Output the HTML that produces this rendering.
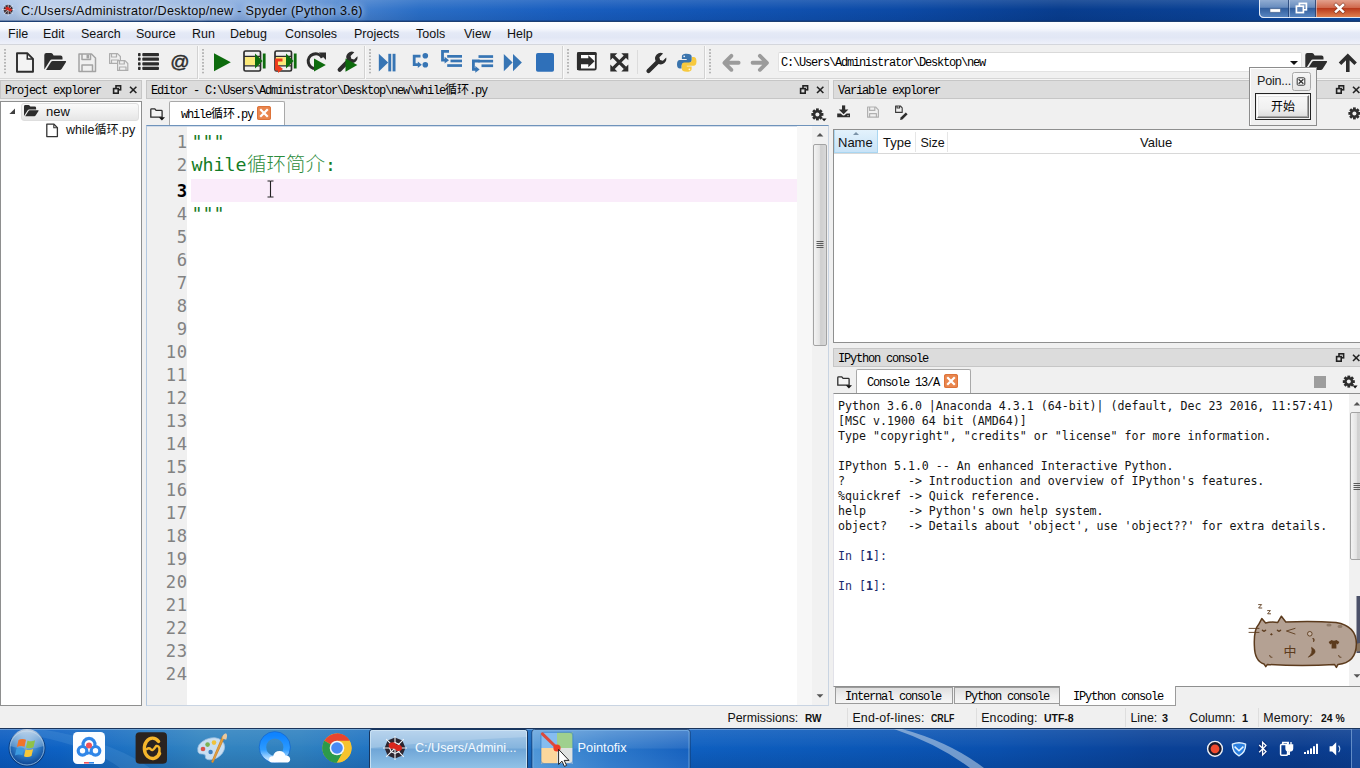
<!DOCTYPE html>
<html lang="zh">
<head>
<meta charset="utf-8">
<title>Spyder (Python 3.6)</title>
<style>
html,body{margin:0;padding:0}
body{width:1360px;height:768px;overflow:hidden;position:relative;background:#f0f0f0;
 font-family:"Liberation Sans","Noto Sans CJK SC",sans-serif;font-size:12px;color:#000}
.abs{position:absolute}
.ui{font-family:"Liberation Sans","Noto Sans CJK SC",sans-serif;font-size:12px;white-space:nowrap;color:#111}
.sim{font-family:"Liberation Mono","Noto Sans CJK SC",monospace;font-size:12px;letter-spacing:-1.2px;white-space:nowrap;color:#000}
.mono{font-family:"DejaVu Sans Mono","Liberation Mono","Noto Sans CJK SC",monospace;white-space:pre}
/* title bar */
#titlebar{left:0;top:0;width:1360px;height:21px;
 background:linear-gradient(90deg,#a8c1e4 0px,#b9cdea 40px,#a3bee4 150px,#7ea5dc 260px,#4d86d0 340px,#2a6ec6 420px,#1a5fc0 560px,#1356b6 700px,#0c4aa6 900px,#083d8e 1060px,#0a4194 1200px,#0d4aa0 1360px)}
#titlebar .shade{left:0;top:0;width:1360px;height:21px;background:linear-gradient(180deg,rgba(255,255,255,.12) 0,rgba(255,255,255,0) 45%,rgba(0,20,60,.10) 100%)}
#tbline{left:0;top:21px;width:1360px;height:1px;background:#1c3f73}
#tbline2{left:0;top:20px;width:1360px;height:1px;background:rgba(20,50,100,.35)}
#title{left:21px;top:3px;font-size:12.6px;letter-spacing:0.28px;line-height:16px;color:#0a0a0a;text-shadow:0 0 6px rgba(255,255,255,.9),0 0 10px rgba(255,255,255,.6)}
/* menu bar */
#menubar{left:0;top:22px;width:1360px;height:22px;background:linear-gradient(180deg,#ffffff 0,#f6f8fd 30%,#e4e9f6 50%,#e2e7f5 70%,#eef1fa 100%)}
#menuline{left:0;top:44px;width:1360px;height:1px;background:#d4d6dc}
.mi{top:27px;line-height:15px;font-size:12.5px}
/* toolbar */
#toolbar{left:0;top:45px;width:1360px;height:34px;background:#f0f0f0}
.grip{top:49px;width:3px;height:26px;background:repeating-linear-gradient(180deg,#b4b4b4 0,#b4b4b4 1px,transparent 1px,transparent 3px)}
.tsep{top:46px;width:1px;height:32px;background:#dadada}
/* docks */
.dtitle{height:19px;background:#dcdcdc;border:1px solid #c6c6c6;box-sizing:border-box}
.dtitle>span{position:absolute;left:3px;top:4px;line-height:13px}
.pane{background:#fff;border:1px solid #8e8f8f;box-sizing:border-box}
</style>
</head>
<body>
<!-- ===== TITLE BAR ===== -->
<div id="titlebar" class="abs"><div class="shade abs"></div></div>
<div id="tbline" class="abs"></div><div id="tbline2" class="abs"></div>
<div id="title" class="abs ui">C:/Users/Administrator/Desktop/new - Spyder (Python 3.6)</div>
<!-- spyder title icon + window controls -->
<svg class="abs" style="left:0;top:0" width="1360" height="22" viewBox="0 0 1360 22">
 <defs>
  <linearGradient id="wcb" x1="0" y1="0" x2="0" y2="1"><stop offset="0" stop-color="#9db6d8"/><stop offset="0.45" stop-color="#6d90c0"/><stop offset="0.5" stop-color="#335f9e"/><stop offset="1" stop-color="#5f8cc6"/></linearGradient>
  <linearGradient id="wcr" x1="0" y1="0" x2="0" y2="1"><stop offset="0" stop-color="#e3a08c"/><stop offset="0.45" stop-color="#d0694d"/><stop offset="0.5" stop-color="#b93a1c"/><stop offset="1" stop-color="#e0804f"/></linearGradient>
 </defs>
 <g>
  <path d="M8.2,4.6 L11.6,6 L13,9.6 L11.6,13.2 L8.2,14.6 L4.8,13.2 L3.4,9.6 L4.8,6 Z" fill="#3a2a30"/>
  <g stroke="#f4f4f8" stroke-width="0.7" fill="none"><path d="M8.2,3.4 V15.8 M2,9.6 H14.4 M3.8,5.2 L12.6,14 M12.6,5.2 L3.8,14"/></g>
  <path d="M5.4,8 q1.4,-1.8 3.2,-0.8 q0.6,1.4 2.2,1.2 q1.4,0.4 1,2.2 q-1.2,1.4 -2.8,0.4 q-0.6,-1.2 -2.2,-0.8 q-1.6,-0.4 -1.4,-2.2 z" fill="#d9261c"/>
 </g>
 <path d="M1259.5,-1 V13 q0,4.5 4.5,4.5 H1361 V-1 Z" fill="url(#wcb)" stroke="#d3dff0" stroke-width="1" opacity=".95"/>
 <path d="M1315.5,0 H1361 V17 H1315.5 Z" fill="url(#wcr)"/>
 <path d="M1288.5,0 V17 M1315.5,0 V17" stroke="#1f3f73" stroke-width="1" opacity=".8"/>
 <path d="M1289.5,0 V17 M1316.5,0 V17" stroke="#cfdcf0" stroke-width="1" opacity=".55"/>
 <path d="M1259.5,-1 V13 q0,4.5 4.5,4.5 H1361" fill="none" stroke="#e3ecf8" stroke-width="1" opacity=".9"/>
 <rect x="1270" y="8.8" width="10.4" height="3.4" fill="#fff" stroke="#52688c" stroke-width="0.6"/>
 <g fill="none" stroke="#fff" stroke-width="1.7"><rect x="1299.4" y="3.4" width="7" height="6.4"/><rect x="1296.4" y="6.2" width="7" height="6.4" fill="#5f84b8"/></g>
 <path d="M1336,5 L1343,11.6 M1343,5 L1336,11.6" stroke="#5a2418" stroke-width="3.8" stroke-linecap="square" opacity=".5"/>
 <path d="M1336,5 L1343,11.6 M1343,5 L1336,11.6" stroke="#fff" stroke-width="2.5" stroke-linecap="square"/>
</svg>
<!-- ===== MENU BAR ===== -->
<div id="menubar" class="abs"></div><div id="menuline" class="abs"></div>
<div class="abs ui mi" style="left:8px">File</div>
<div class="abs ui mi" style="left:43px">Edit</div>
<div class="abs ui mi" style="left:81px">Search</div>
<div class="abs ui mi" style="left:136px">Source</div>
<div class="abs ui mi" style="left:192px">Run</div>
<div class="abs ui mi" style="left:230px">Debug</div>
<div class="abs ui mi" style="left:285px">Consoles</div>
<div class="abs ui mi" style="left:354px">Projects</div>
<div class="abs ui mi" style="left:416px">Tools</div>
<div class="abs ui mi" style="left:464px">View</div>
<div class="abs ui mi" style="left:507px">Help</div>
<!-- ===== TOOLBAR ===== -->
<div id="toolbar" class="abs"></div><div class="abs" style="left:0;top:78px;width:1360px;height:1px;background:#d6d6d6"></div><div class="abs" style="left:0;top:79px;width:1360px;height:1px;background:#f5f5f5"></div>
<!--TB-START-->
<svg class="abs" style="left:0;top:0" width="1360" height="80" viewBox="0 0 1360 80">
<!-- grips / separators -->
<g fill="#b9b9b9">
 <rect x="4" y="49" width="2" height="26" fill="url(#gripdots)"/>
</g>
<defs>
 <pattern id="gripdots" x="0" y="49" width="2" height="3.25" patternUnits="userSpaceOnUse"><rect x="0" y="0" width="2" height="1.6" fill="#b4b4b4"/></pattern>
</defs>
<g>
 <rect x="202" y="49" width="2" height="26" fill="url(#gripdots)"/>
 <rect x="369" y="49" width="2" height="26" fill="url(#gripdots)"/>
 <rect x="567" y="49" width="2" height="26" fill="url(#gripdots)"/>
 <rect x="709" y="49" width="2" height="26" fill="url(#gripdots)"/>
 <rect x="197" y="46" width="1" height="33" fill="#d2d2d2"/><rect x="198" y="46" width="1" height="33" fill="#fafafa"/>
 <rect x="364" y="46" width="1" height="33" fill="#d2d2d2"/><rect x="365" y="46" width="1" height="33" fill="#fafafa"/>
 <rect x="562" y="46" width="1" height="33" fill="#d2d2d2"/><rect x="563" y="46" width="1" height="33" fill="#fafafa"/>
 <rect x="704" y="46" width="1" height="33" fill="#d2d2d2"/><rect x="705" y="46" width="1" height="33" fill="#fafafa"/>
 <rect x="637" y="50" width="1" height="24" fill="#dcdcdc"/>
</g>
<!-- new file -->
<path d="M17,53.3 H27.5 L33,58.8 V71.7 H17 Z" fill="#f3f3f3" stroke="#2d2d2d" stroke-width="1.9" stroke-linejoin="round"/>
<path d="M27.3,53.5 V59 H33" fill="none" stroke="#2d2d2d" stroke-width="1.5"/>
<!-- open folder -->
<g fill="#2d2d2d">
 <path d="M44.3,55 q0,-2 2,-2 h4.6 q1.2,0 1.8,1 l0.9,1.4 h6.9 q2,0 2,2 v2.2 h-10.6 q-1.3,0 -2,1.2 l-5.6,8.6 z"/>
 <path d="M46,70 l5,-8 q0.6,-1 1.8,-1 h12.5 q1.3,0 0.6,1.2 l-4.3,6.8 q-0.7,1 -1.9,1 z"/>
</g>
<!-- save (disabled) -->
<g fill="none" stroke="#a3a3a3" stroke-width="1.5" stroke-linejoin="round">
 <path d="M79,54 H91.5 L95.5,58 V71.5 H79 Z"/>
 <path d="M82,54 V59.5 H90.5 V54"/>
 <path d="M82,71.5 V65 H92.5 V71.5"/>
</g>
<rect x="86.5" y="54.5" width="2.5" height="4" fill="#a3a3a3"/>
<!-- save all (disabled) -->
<g fill="none" stroke="#adadad" stroke-width="1.2" stroke-linejoin="round">
 <path d="M109.6,53.6 H117.5 L120.4,56.5 V63.4 H109.6 Z"/>
 <path d="M111.5,53.6 V57 H116.5 V53.6"/>
 <path d="M111.5,63.4 V60 H118.5 V63.4"/>
 <path d="M117.6,60.6 H125 L127.8,63.5 V70.4 H117.6 Z" fill="#f0f0f0"/>
 <path d="M119.5,60.6 V64 H124.3 V60.6"/>
 <path d="M119.5,70.4 V67 H126 V70.4"/>
</g>
<!-- list -->
<g fill="#2d2d2d">
 <rect x="138" y="53" width="2.6" height="3.2" rx=".7"/><rect x="142.3" y="53" width="16.7" height="3.2" rx=".9"/>
 <rect x="138" y="57.6" width="2.6" height="3.2" rx=".7"/><rect x="142.3" y="57.6" width="16.7" height="3.2" rx=".9"/>
 <rect x="138" y="62.2" width="2.6" height="3.2" rx=".7"/><rect x="142.3" y="62.2" width="16.7" height="3.2" rx=".9"/>
 <rect x="138" y="66.8" width="2.6" height="3.2" rx=".7"/><rect x="142.3" y="66.8" width="16.7" height="3.2" rx=".9"/>
</g>
<!-- @ -->
<text x="170.3" y="68.3" font-family="Liberation Sans, sans-serif" font-size="19" fill="#2d2d2d" stroke="#2d2d2d" stroke-width="0.45">@</text>
<!-- run -->
<path d="M214,53.3 L230.8,62.3 L214,71.3 Z" fill="#0d6b0d"/>
<!-- run cell -->
<g>
 <rect x="244" y="51" width="16.5" height="20" rx="1.5" fill="#f0f0f0" stroke="#2d2d2d" stroke-width="1.7"/>
 <rect x="245" y="57" width="14.5" height="8.2" fill="#fbe97a"/>
 <path d="M244,56.4 H260.5 M244,65.8 H260.5" stroke="#2d2d2d" stroke-width="1.3"/>
 <path d="M255,53.5 L262.6,61 L255,68.5 Z" fill="#0d6b0d"/>
 <rect x="262.8" y="53.5" width="2.8" height="15" fill="#0d6b0d"/>
</g>
<!-- run cell advance -->
<g>
 <rect x="275" y="51" width="16.5" height="20" rx="1.5" fill="#f0f0f0" stroke="#2d2d2d" stroke-width="1.7"/>
 <rect x="276" y="57" width="14.5" height="8.2" fill="#fbe97a"/>
 <path d="M275,56.4 H291.5 M275,65.8 H291.5" stroke="#2d2d2d" stroke-width="1.3"/>
 <path d="M286,53.5 L293.6,61 L286,68.5 Z" fill="#0d6b0d"/>
 <rect x="293.8" y="53.5" width="2.8" height="15" fill="#0d6b0d"/>
 <path d="M282.5,60 H276.5 V69 H279" fill="none" stroke="#ee3b1c" stroke-width="2.9"/>
 <path d="M278,65 L283,69 L278,73 Z" fill="#ee3b1c"/>
</g>
<!-- re-run -->
<g>
 <path d="M316,68.6 A7.4,7.4 0 1 1 322.2,57.8" fill="none" stroke="#2d2d2d" stroke-width="3"/>
 <path d="M318.8,52.5 H326 V60 Z" fill="#2d2d2d"/>
 <path d="M314,58.5 L325.8,65 L314,71.6 Z" fill="#0d6b0d"/>
</g>
<!-- configure -->
<g>
 <path d="M338.2,68.2 L346.8,59.6 A5.6,5.6 0 0 1 354.3,52.2 L350.6,55.9 L351.3,58.7 L354.1,59.4 L357.4,56.2 A5.6,5.6 0 0 1 349.8,62.6 L341.2,71.2 A2.1,2.1 0 0 1 338.2,68.2 Z" fill="#2d2d2d"/>
 <path d="M345.5,58.5 L357.3,65 L345.5,71.8 Z" fill="#0d6b0d"/>
</g>
<!-- debug -->
<g fill="#3775b4">
 <path d="M378.8,53.8 L388.2,62.6 L378.8,71.4 Z"/>
 <rect x="388.3" y="53.8" width="2.9" height="17.6"/>
 <rect x="392.6" y="53.8" width="2.9" height="17.6"/>
</g>
<!-- step -->
<g fill="#3775b4">
 <circle cx="425.3" cy="55.8" r="2.8"/><circle cx="425.3" cy="64.8" r="2.8"/>
 <path d="M420.5,56.2 H414.2 V64.7 H418.5" fill="none" stroke="#3775b4" stroke-width="2.8"/>
 <path d="M417.8,61.6 L421.8,64.8 L417.8,68 Z"/>
</g>
<!-- step into -->
<g fill="#3775b4">
 <path d="M449,51.4 H442.5 V60.2 H445.5" fill="none" stroke="#3775b4" stroke-width="2.8"/>
 <path d="M444.6,56.8 L449,60.2 L444.6,63.6 Z"/>
 <rect x="447.2" y="55" width="14.8" height="2.7"/>
 <rect x="450.5" y="59.6" width="11.5" height="2.7"/>
 <rect x="447.2" y="64.2" width="14.8" height="2.7"/>
</g>
<!-- step return -->
<g fill="#3775b4">
 <rect x="478.5" y="55.2" width="14.6" height="2.7"/>
 <rect x="478.5" y="59.8" width="14.6" height="2.7"/>
 <rect x="481.5" y="64.4" width="11.6" height="2.7"/>
 <path d="M479.5,61 H473.4 V69.3 H476" fill="none" stroke="#3775b4" stroke-width="2.8"/>
 <path d="M475.3,66 L479.6,69.4 L475.3,72.8 Z"/>
</g>
<!-- continue -->
<g fill="#3775b4">
 <path d="M503.8,54 L512.6,62.6 L503.8,71.2 Z"/><path d="M513,54 L521.9,62.6 L513,71.2 Z"/>
</g>
<!-- stop -->
<rect x="536" y="53" width="18" height="18.8" rx="1.8" fill="#2f70b9"/>
<!-- maximize pane -->
<g>
 <rect x="577.8" y="53" width="18" height="16.5" rx="1.3" fill="#fdfdfd" stroke="#2d2d2d" stroke-width="1.8"/>
 <rect x="577" y="52.2" width="19.6" height="2.8" rx="1" fill="#2d2d2d"/>
 <rect x="577" y="53" width="4" height="17" fill="#2d2d2d"/>
 <path d="M581,58.3 H588.3 V55.3 L594.6,61.3 L588.3,67.3 V64.3 H581 Z" fill="#2d2d2d"/>
</g>
<!-- fullscreen -->
<g fill="#2d2d2d">
 <path d="M613.4,56.4 L625.2,68.2 M625.2,56.4 L613.4,68.2" stroke="#2d2d2d" stroke-width="3.2"/>
 <path d="M610.3,53.2 H617.3 L610.3,60.2 Z"/><path d="M628.3,53.2 H621.3 L628.3,60.2 Z"/>
 <path d="M610.3,71.6 H617.3 L610.3,64.6 Z"/><path d="M628.3,71.6 H621.3 L628.3,64.6 Z"/>
</g>
<!-- wrench -->
<path d="M647,69.5 L655.6,60.9 A5.6,5.6 0 0 1 663.1,53.5 L659.4,57.2 L660.1,60 L662.9,60.7 L666.2,57.5 A5.6,5.6 0 0 1 658.6,63.9 L650,72.5 A2.1,2.1 0 0 1 647,69.5 Z" fill="#2d2d2d"/>
<!-- python -->
<g>
 <path d="M686.5,53.8 c-3.6,0 -4.6,1.4 -4.6,3 v2.3 h4.8 v0.8 h-6.8 c-1.8,0 -2.9,1.5 -2.9,4.3 c0,2.9 1.1,4.3 2.9,4.3 h1.7 v-2.4 c0,-1.7 1.3,-3 3,-3 h4.6 c1.5,0 2.5,-1.1 2.5,-2.5 v-3.8 c0,-1.7 -1.6,-3 -5.2,-3 z" fill="#3a74ad"/>
 <path d="M687,71.8 c3.6,0 4.6,-1.4 4.6,-3 v-2.3 h-4.8 v-0.8 h6.8 c1.8,0 2.9,-1.5 2.9,-4.3 c0,-2.9 -1.1,-4.3 -2.9,-4.3 h-1.7 v2.4 c0,1.7 -1.3,3 -3,3 h-4.6 c-1.5,0 -2.5,1.1 -2.5,2.5 v3.8 c0,1.7 1.6,3 5.2,3 z" fill="#f7c93e"/>
 <circle cx="684.2" cy="56.3" r="0.9" fill="#e8eef6"/><circle cx="689.4" cy="69.3" r="0.9" fill="#fff6d8"/>
</g>
<!-- back / forward -->
<g fill="none" stroke="#9b9b9b" stroke-width="3.9" stroke-linecap="round" stroke-linejoin="round">
 <path d="M738.6,62.8 H725.5 M731.4,55.8 L724.4,62.8 L731.4,69.8"/>
 <path d="M752.6,62.8 H765.8 M759.9,55.8 L766.9,62.8 L759.9,69.8"/>
</g>
<!-- browse folder -->
<g fill="#2d2d2d">
 <path d="M1305.3,55 q0,-2 2,-2 h4.6 q1.2,0 1.8,1 l0.9,1.4 h6.9 q2,0 2,2 v2.2 h-10.6 q-1.3,0 -2,1.2 l-5.6,8.6 z"/>
 <path d="M1307,70 l5,-8 q0.6,-1 1.8,-1 h12.5 q1.3,0 0.6,1.2 l-4.3,6.8 q-0.7,1 -1.9,1 z"/>
</g>
<!-- up -->
<g fill="none" stroke="#2d2d2d" stroke-width="3.6">
 <path d="M1347.8,72 V58 M1340,63.8 L1347.8,56 L1355.6,63.8"/>
</g>
</svg>
<!-- path combobox -->
<div class="abs" style="left:778px;top:52px;width:524px;height:20px;background:#fff;border:1px solid #e2e2e2;border-top-color:#d9d9d9;box-sizing:border-box;border-radius:2px"></div>
<div class="abs sim" style="left:781px;top:57px;line-height:13px">C:\Users\Administrator\Desktop\new</div>
<div class="abs" style="left:1289.6px;top:60.6px;width:0;height:0;border-left:4px solid transparent;border-right:4px solid transparent;border-top:4.4px solid #111"></div>
<!--TB-END-->
<!-- ===== DOCKS ===== -->
<!--DK-START-->
<style>
.fl{width:8px;height:8px}
.tabx{width:14px;height:14px;border-radius:2.5px;background:#e9864e;box-shadow:inset 0 0 0 1px #dd7339}
.ln{left:148.6px;width:39px;text-align:right;font-size:17.2px;letter-spacing:0.6px;line-height:23.02px;color:#828282}
.code{left:191.4px;font-size:18.3px;line-height:23.02px;color:#137c25}
.code .cj{font-family:"Noto Sans CJK SC",sans-serif;font-size:19.5px;letter-spacing:0;font-weight:300;line-height:0;color:#2c8c3c;margin-left:0.6px}
.con{font-size:11.62px;line-height:15px;color:#141414}
.hdr{top:132px;height:23px;line-height:22px;font-size:13px}
.btab{top:687px;height:17px;box-sizing:border-box;border:1px solid #9b9b9b;background:linear-gradient(180deg,#dedede 0,#ececec 45%,#f6f6f6 100%)}
.btab span{position:absolute;top:2.6px;line-height:13px}
</style>
<!-- project explorer -->
<div class="abs dtitle" style="left:0;top:80px;width:142px"><span class="sim" style="left:4px">Project explorer</span></div>
<svg class="abs" style="left:112px;top:84px" width="28" height="12" viewBox="112 84 28 12">
 <g fill="none" stroke="#222" stroke-width="1.6"><rect x="116" y="85.8" width="4.6" height="4"/><rect x="113.6" y="88.6" width="4.6" height="4.6" fill="#dcdcdc"/></g>
 <path d="M130,86.8 L136.4,93 M136.4,86.8 L130,93" stroke="#222" stroke-width="1.6" fill="none"/>
</svg>
<div class="abs pane" style="left:0;top:101px;width:142px;height:605px"></div>
<div class="abs" style="left:21px;top:103px;width:118px;height:18px;box-sizing:border-box;border:1px solid #dedede;border-radius:3px;background:linear-gradient(180deg,#fafafa 0,#f1f1f1 50%,#e6e6e6 100%)"></div>
<svg class="abs" style="left:0;top:102px" width="142" height="40" viewBox="0 102 142 40">
 <path d="M15,108.6 V114 H9.4 Z" fill="#404040"/>
 <g fill="#2d2d2d">
  <path d="M24,106.4 q0,-1.4 1.4,-1.4 h3 q0.9,0 1.3,0.7 l0.6,0.9 h4.4 q1.4,0 1.4,1.4 v1.5 h-7 q-0.9,0 -1.4,0.8 l-3.7,5.7 z"/>
  <path d="M25.2,116.3 l3.3,-5.3 q0.4,-0.7 1.2,-0.7 h8.4 q0.9,0 0.4,0.8 l-2.9,4.5 q-0.5,0.7 -1.3,0.7 z"/>
 </g>
 <path d="M46.8,124.2 H54 L57.4,127.6 V136.6 H46.8 Z" fill="#fff" stroke="#333" stroke-width="1.3" stroke-linejoin="round"/>
 <path d="M53.8,124.4 V127.8 H57.2" fill="none" stroke="#333" stroke-width="1.1"/>
</svg>
<div class="abs ui" style="left:46px;top:104px;line-height:16px;font-size:13px">new</div>
<div class="abs ui" style="left:66px;top:122px;line-height:17px;font-size:12.5px">while<span style="font-size:12px">循环</span>.py</div>

<!-- editor -->
<div class="abs dtitle" style="left:146px;top:80px;width:683px"><span class="sim" style="left:4px">Editor - C:\Users\Administrator\Desktop\new\while<span style="font-size:12px;letter-spacing:0">循环</span>.py</span></div>
<svg class="abs" style="left:799px;top:84px" width="28" height="12" viewBox="112 84 28 12">
 <g fill="none" stroke="#222" stroke-width="1.6"><rect x="116" y="85.8" width="4.6" height="4"/><rect x="113.6" y="88.6" width="4.6" height="4.6" fill="#dcdcdc"/></g>
 <path d="M130,86.8 L136.4,93 M136.4,86.8 L130,93" stroke="#222" stroke-width="1.6" fill="none"/>
</svg>
<!-- tab bar -->
<svg class="abs" style="left:148px;top:104px" width="20" height="20" viewBox="148 104 20 20">
 <path d="M150.8,117.2 V109.6 q0,-0.8 0.8,-0.8 h3.2 l1.3,1.6 h5.2 q0.8,0 0.8,0.8 v6 z" fill="#f4f4f4" stroke="#2d2d2d" stroke-width="1.3"/>
 <path d="M158.8,117.2 h6.2 l-3.1,3.4 z" fill="#111"/>
</svg>
<div class="abs" style="left:169px;top:101px;width:116px;height:25px;box-sizing:border-box;background:#fff;border:1px solid #a9a9a9;border-bottom:none;border-radius:2px 2px 0 0"></div>
<div class="abs sim" style="left:181px;top:107.5px;line-height:14px">while<span style="font-size:12px;letter-spacing:0">循环</span>.py</div>
<div class="abs tabx" style="left:257px;top:106px"></div>
<svg class="abs" style="left:257px;top:106px" width="14" height="14" viewBox="0 0 14 14"><path d="M4,4 L10,10 M10,4 L4,10" stroke="#fff" stroke-width="2.2" stroke-linecap="square"/></svg>
<!-- gear -->
<svg class="abs" style="left:811px;top:108px" width="17" height="14" viewBox="0 0 17 14">
 <g transform="translate(6.4,6.4)">
  <g fill="#2d2d2d"><rect x="-1.4" y="-6" width="2.8" height="12"/><rect x="-1.4" y="-6" width="2.8" height="12" transform="rotate(45)"/><rect x="-1.4" y="-6" width="2.8" height="12" transform="rotate(90)"/><rect x="-1.4" y="-6" width="2.8" height="12" transform="rotate(135)"/><circle r="4.5"/></g>
  <circle r="2" fill="#f0f0f0"/>
 </g>
 <path d="M10.6,10.4 h5 l-2.5,2.8 z" fill="#111"/>
</svg>
<!-- editor body -->
<div class="abs" style="left:146px;top:125px;width:683px;height:581px;box-sizing:border-box;background:#fff;border:1px solid #c9d4e2;border-top:1px solid #6f93bb;border-left:1px solid #b3c8e0"></div>
<div class="abs" style="left:147px;top:126px;width:40px;height:579px;background:#f0f0f0"></div><div class="abs" style="left:147px;top:126px;width:681px;height:1px;background:#c9d6e6;opacity:.8"></div>
<div class="abs" style="left:191px;top:179px;width:606px;height:23px;background:#faecfa"></div>
<div class="abs" style="left:797px;top:126px;width:15px;height:579px;background:#f7f7f7"></div>
<!-- editor scrollbar -->
<div class="abs" style="left:812px;top:126px;width:16px;height:579px;background:#f1f1f1"></div>
<div class="abs" style="left:812.5px;top:144px;width:14.5px;height:202px;box-sizing:border-box;border:1px solid #a3a3a3;border-radius:2px;background:linear-gradient(90deg,#f3f3f3 0,#e4e4e4 45%,#cfcfcf 55%,#d8d8d8 100%)"></div>
<svg class="abs" style="left:812px;top:126px" width="16" height="579" viewBox="0 0 16 579">
 <path d="M4.6,10.6 L8,7 L11.4,10.6 Z" fill="#555"/>
 <path d="M4.6,568.2 L8,571.8 L11.4,568.2 Z" fill="#555"/>
 <path d="M4.5,115.5 h7 M4.5,117.5 h7 M4.5,119.5 h7 M4.5,121.5 h7" stroke="#5a5a5a" stroke-width="1"/>
</svg>
<!-- line numbers -->
<div class="abs mono ln" style="top:131px">1
2</div>
<div class="abs mono ln" style="top:179.8px;line-height:23px"><span style="color:#000;font-weight:bold">3</span>
4
5
6
7
8
9
10
11
12
13
14
15
16
17
18
19
20
21
22
23
24</div>
<div class="abs mono code" style="top:130px">"""
while<span class="cj">循环简介</span>:</div>
<div class="abs mono code" style="top:178.8px;line-height:23px">
"""</div>
<!-- I-beam -->
<svg class="abs" style="left:266px;top:180px" width="9" height="18" viewBox="0 0 9 18"><path d="M1.5,1 h2.2 q0.8,0 0.8,0.8 q0,-0.8 0.8,-0.8 h2.2 M4.5,1.6 V16.4 M1.5,17 h2.2 q0.8,0 0.8,-0.8 q0,0.8 0.8,0.8 h2.2" fill="none" stroke="#222" stroke-width="1.1"/></svg>

<!-- variable explorer -->
<div class="abs dtitle" style="left:833px;top:80px;width:540px"><span class="sim" style="left:4px">Variable explorer</span></div>
<svg class="abs" style="left:1335px;top:84px" width="25" height="12" viewBox="112 84 25 12">
 <g fill="none" stroke="#222" stroke-width="1.6"><rect x="116" y="85.8" width="4.6" height="4"/><rect x="113.6" y="88.6" width="4.6" height="4.6" fill="#dcdcdc"/></g>
 <path d="M130,86.8 L136.4,93 M136.4,86.8 L130,93" stroke="#222" stroke-width="1.6" fill="none"/>
</svg>
<svg class="abs" style="left:834px;top:103px" width="80" height="20" viewBox="834 103 80 20">
 <!-- import -->
 <g fill="#2d2d2d"><rect x="842" y="105.4" width="3.2" height="4.6"/><path d="M838.8,109.6 h9.6 l-4.8,4.6 z"/><path d="M837.2,113.6 h3.4 l2.4,2 h1.2 l2.4,-2 h3.4 v3.6 h-12.8 z"/></g>
 <circle cx="848" cy="115.6" r="0.6" fill="#f0f0f0"/>
 <!-- save disabled -->
 <g fill="none" stroke="#b0b0b0" stroke-width="1.2" stroke-linejoin="round"><path d="M867.6,107 h8 l2.8,2.8 v7.4 h-10.8 z"/><path d="M869.6,107 v3.4 h5.2 V107"/><path d="M869.6,117.2 v-3.6 h6.8 v3.6"/></g>
 <!-- save as -->
 <g fill="none" stroke="#3a3a3a" stroke-width="1.1" stroke-linejoin="round"><path d="M895.6,106 h4.8 l1.8,1.8 v4.6 h-6.6 z"/><path d="M897,106 v2 h2.6 v-2"/></g>
 <path d="M900.6,117.6 l5.2,-5.2 l1.8,1.8 l-5.2,5.2 l-2.3,0.5 z" fill="#2d2d2d"/>
</svg>
<svg class="abs" style="left:1346px;top:107px" width="14" height="14" viewBox="0 0 14 14">
 <g transform="translate(8.4,6.4)">
  <g fill="#2d2d2d"><rect x="-1.4" y="-6" width="2.8" height="12"/><rect x="-1.4" y="-6" width="2.8" height="12" transform="rotate(45)"/><rect x="-1.4" y="-6" width="2.8" height="12" transform="rotate(90)"/><rect x="-1.4" y="-6" width="2.8" height="12" transform="rotate(135)"/><circle r="4.5"/></g>
  <circle r="2" fill="#f0f0f0"/>
 </g>
</svg>
<div class="abs pane" style="left:833px;top:129px;width:540px;height:214px"></div>
<div class="abs" style="left:834px;top:130px;width:526px;height:23px;background:#fff;border-bottom:1px solid #d8d8d8"></div>
<div class="abs" style="left:834px;top:130px;width:44px;height:23px;box-sizing:border-box;border:1px solid #a9d6f1;border-top:none;background:linear-gradient(180deg,#e3f2fc 0,#d5eaf9 50%,#c9e3f7 100%)"></div>
<div class="abs" style="left:915px;top:132px;width:1px;height:20px;background:#e6e6e6"></div>
<div class="abs" style="left:947px;top:132px;width:1px;height:20px;background:#e6e6e6"></div>
<div class="abs" style="left:853px;top:131.5px;width:0;height:0;border-left:3.5px solid transparent;border-right:3.5px solid transparent;border-bottom:3px solid #7b93a8"></div>
<div class="abs ui hdr" style="left:838px">Name</div>
<div class="abs ui hdr" style="left:883px">Type</div>
<div class="abs ui hdr" style="left:920.5px;font-size:12.5px">Size</div>
<div class="abs ui hdr" style="left:1140px">Value</div>

<!-- ipython console -->
<div class="abs dtitle" style="left:833px;top:348px;width:540px"><span class="sim" style="left:4px">IPython console</span></div>
<svg class="abs" style="left:1335px;top:352px" width="25" height="12" viewBox="112 84 25 12">
 <g fill="none" stroke="#222" stroke-width="1.6"><rect x="116" y="85.8" width="4.6" height="4"/><rect x="113.6" y="88.6" width="4.6" height="4.6" fill="#dcdcdc"/></g>
 <path d="M130,86.8 L136.4,93 M136.4,86.8 L130,93" stroke="#222" stroke-width="1.6" fill="none"/>
</svg>
<svg class="abs" style="left:835px;top:372px" width="20" height="20" viewBox="148 104 20 20">
 <path d="M150.8,117.2 V109.6 q0,-0.8 0.8,-0.8 h3.2 l1.3,1.6 h5.2 q0.8,0 0.8,0.8 v6 z" fill="#f4f4f4" stroke="#2d2d2d" stroke-width="1.3"/>
 <path d="M158.8,117.2 h6.2 l-3.1,3.4 z" fill="#111"/>
</svg>
<div class="abs" style="left:856px;top:369px;width:115px;height:25px;box-sizing:border-box;background:#fff;border:1px solid #a9a9a9;border-bottom:none;border-radius:2px 2px 0 0"></div>
<div class="abs sim" style="left:867px;top:375.5px;line-height:14px">Console 13/A</div>
<div class="abs tabx" style="left:944px;top:374px"></div>
<svg class="abs" style="left:944px;top:374px" width="14" height="14" viewBox="0 0 14 14"><path d="M4,4 L10,10 M10,4 L4,10" stroke="#fff" stroke-width="2.2" stroke-linecap="square"/></svg>
<div class="abs" style="left:1314px;top:376px;width:12px;height:12px;background:#9d9d9d"></div>
<svg class="abs" style="left:1342px;top:375px" width="17" height="14" viewBox="0 0 17 14">
 <g transform="translate(6.8,6.6)">
  <g fill="#2d2d2d"><rect x="-1.4" y="-6" width="2.8" height="12"/><rect x="-1.4" y="-6" width="2.8" height="12" transform="rotate(45)"/><rect x="-1.4" y="-6" width="2.8" height="12" transform="rotate(90)"/><rect x="-1.4" y="-6" width="2.8" height="12" transform="rotate(135)"/><circle r="4.5"/></g>
  <circle r="2" fill="#f0f0f0"/>
 </g>
 <path d="M10.6,10.6 h5 l-2.5,2.8 z" fill="#111"/>
</svg>
<div class="abs pane" style="left:833px;top:393px;width:540px;height:294px;border-left-color:#e2e2e9"></div>
<div class="abs mono con" style="left:838px;top:399.4px">Python 3.6.0 |Anaconda 4.3.1 (64-bit)| (default, Dec 23 2016, 11:57:41)
[MSC v.1900 64 bit (AMD64)]
Type "copyright", "credits" or "license" for more information.

IPython 5.1.0 -- An enhanced Interactive Python.
?         -> Introduction and overview of IPython's features.
%quickref -> Quick reference.
help      -> Python's own help system.
object?   -> Details about 'object', use 'object??' for extra details.

<span style="color:#1a2a6c">In [<b>1</b>]:</span>

<span style="color:#1a2a6c">In [<b>1</b>]:</span></div>
<!-- console scrollbar -->
<div class="abs" style="left:1349px;top:394px;width:11px;height:292px;background:#f1f1f1"></div>
<div class="abs" style="left:1350px;top:412px;width:14px;height:148px;box-sizing:border-box;border:1px solid #a3a3a3;border-radius:2px;background:linear-gradient(90deg,#f3f3f3 0,#e4e4e4 45%,#cfcfcf 55%,#d8d8d8 100%)"></div>
<svg class="abs" style="left:1349px;top:394px" width="11" height="292" viewBox="0 0 11 292">
 <path d="M4.6,11.6 L8,8 L11.4,11.6 Z" fill="#555"/>
 <path d="M4.6,280.2 L8,283.8 L11.4,280.2 Z" fill="#555"/>
 <path d="M4.5,89.5 h7 M4.5,91.5 h7 M4.5,93.5 h7 M4.5,95.5 h7" stroke="#5a5a5a" stroke-width="1"/>
</svg>
<!-- bottom tabs -->
<div class="abs btab" style="left:835px;width:118px"><span class="sim" style="left:9px">Internal console</span></div>
<div class="abs btab" style="left:954px;width:106px"><span class="sim" style="left:10px">Python console</span></div>
<div class="abs" style="left:1059px;top:686px;width:117px;height:20px;box-sizing:border-box;border:1px solid #9b9b9b;border-top:none;background:#fff"><span class="sim" style="position:absolute;left:13px;top:4.4px;line-height:14px">IPython console</span></div>
<!--DK-END-->
<!-- ===== STATUS BAR ===== -->
<!--ST-START-->
<div class="abs" style="left:0;top:706px;width:1360px;height:22px;background:#f0f0f0"></div>
<style>.st{top:711px;line-height:15px;font-size:12.4px}.sv{top:711px;line-height:15px;font-size:11.4px;font-weight:bold;transform-origin:0 50%;color:#111}.ssep{top:708px;width:1px;height:19px;background:#dedede}</style>
<div class="abs ui st" style="left:727.4px">Permissions:</div><div class="abs ui sv" style="left:805.4px;transform:scaleX(.88)">RW</div>
<div class="abs ssep" style="left:847px"></div>
<div class="abs ui st" style="left:852.4px;letter-spacing:.2px">End-of-lines:</div><div class="abs ui sv" style="left:931px;transform:scaleX(.77)">CRLF</div>
<div class="abs ssep" style="left:976px"></div>
<div class="abs ui st" style="left:981.2px;letter-spacing:.15px">Encoding:</div><div class="abs ui sv" style="left:1044.2px;transform:scaleX(.92)">UTF-8</div>
<div class="abs ssep" style="left:1125px"></div>
<div class="abs ui st" style="left:1130.4px">Line:</div><div class="abs ui sv" style="left:1161.6px;transform:scaleX(.95)">3</div>
<div class="abs ui st" style="left:1189.2px">Column:</div><div class="abs ui sv" style="left:1242.2px;transform:scaleX(.95)">1</div>
<div class="abs ssep" style="left:1258px"></div>
<div class="abs ui st" style="left:1263.2px;letter-spacing:.2px">Memory:</div><div class="abs ui sv" style="left:1321.2px;transform:scaleX(.91)">24 %</div>
<!--ST-END-->
<!-- ===== TASKBAR ===== -->
<!--TK-START-->
<div class="abs" style="left:0;top:728px;width:1360px;height:40px;background:linear-gradient(90deg,#0b5cc0 0,#0d62c4 60px,#1f73c2 130px,#3284c0 200px,#2f81c0 300px,#2174c2 370px,#0e5fc0 700px,#0b58b8 850px,#0a50ae 1000px,#0a4298 1150px,#0a3c8e 1300px,#0b3f92 1360px)"></div>
<div class="abs" style="left:0;top:728px;width:1360px;height:40px;background:linear-gradient(180deg,rgba(255,255,255,.10) 0,rgba(255,255,255,.03) 40%,rgba(0,0,0,0) 50%,rgba(0,10,40,.12) 100%)"></div>
<div class="abs" style="left:0;top:728px;width:1360px;height:1px;background:#1b355c"></div>
<div class="abs" style="left:0;top:729px;width:1360px;height:1px;background:rgba(255,255,255,.28)"></div>
<svg class="abs" style="left:0;top:728px" width="1360" height="40" viewBox="0 728 1360 40">
<defs>
 <radialGradient id="orb" cx="50%" cy="35%" r="65%"><stop offset="0" stop-color="#8fc0ea"/><stop offset="0.55" stop-color="#2f7cc8"/><stop offset="1" stop-color="#0b3f8c"/></radialGradient>
 <linearGradient id="orbtop" x1="0" y1="0" x2="0" y2="1"><stop offset="0" stop-color="#dfe9f3" stop-opacity=".85"/><stop offset="1" stop-color="#8fb6da" stop-opacity=".35"/></linearGradient>
 <linearGradient id="qqb" x1="0" y1="0" x2="0" y2="1"><stop offset="0" stop-color="#0f84ff"/><stop offset="0.6" stop-color="#2d9bff"/><stop offset="1" stop-color="#bfe3ff"/></linearGradient>
 <linearGradient id="tbA" x1="0" y1="0" x2="0" y2="1"><stop offset="0" stop-color="#aacbea"/><stop offset="0.45" stop-color="#86b5de"/><stop offset="0.5" stop-color="#70a6d7"/><stop offset="1" stop-color="#93c4e8"/></linearGradient>
 <linearGradient id="tbB" x1="0" y1="0" x2="1" y2="0"><stop offset="0" stop-color="#4f97d8"/><stop offset="0.5" stop-color="#2c78ca"/><stop offset="1" stop-color="#1661bf"/></linearGradient>
 <linearGradient id="tbBs" x1="0" y1="0" x2="0" y2="1"><stop offset="0" stop-color="#fff" stop-opacity=".25"/><stop offset="0.45" stop-color="#fff" stop-opacity=".08"/><stop offset="0.5" stop-color="#fff" stop-opacity="0"/><stop offset="1" stop-color="#fff" stop-opacity=".05"/></linearGradient>
</defs>
<!-- light streaks -->
<path d="M902,729 Q950,742 984,768 L970,768 Q938,744 894,729 Z" fill="#c9d8ea" opacity=".55"/>
<path d="M40,729 Q110,740 150,768 L120,768 Q90,745 20,733 Z" fill="#5aa0dc" opacity=".25"/>
<!-- start orb -->
<circle cx="27" cy="748" r="18" fill="url(#orb)" stroke="#0b3a78" stroke-width="1"/>
<circle cx="27" cy="748" r="17" fill="none" stroke="#9cc6ea" stroke-width="1" opacity=".8"/>
<path d="M10,746 A17,17 0 0 1 44,746 Q27,752 10,746 Z" fill="url(#orbtop)"/>
<g>
 <path d="M18.5,740 q3.5,-2 7.5,-0.3 l-1.5,7 q-3.8,-1.6 -7.6,0.3 z" fill="#f0742a"/>
 <path d="M27.5,740.4 q3.8,1.8 7.6,-0.2 l-1.6,7 q-3.8,2 -7.5,0.2 z" fill="#8fc24a"/>
 <path d="M16.5,748.6 q3.8,-1.9 7.5,-0.3 l-1.6,7 q-3.7,-1.7 -7.5,0.3 z" fill="#3d9be0"/>
 <path d="M25.6,749.2 q3.7,1.8 7.5,-0.2 l-1.6,7 q-3.8,2 -7.5,0.2 z" fill="#f9c838"/>
</g>
<!-- baidu netdisk -->
<rect x="73" y="732" width="32" height="32" rx="4.5" fill="#fbfdff"/>
<g fill="none" stroke-width="3.2">
 <circle cx="82.5" cy="750.8" r="4.3" stroke="#2f86e8"/>
 <circle cx="95.5" cy="750.8" r="4.3" stroke="#2f86e8"/>
 <path d="M83.2,746 A6,6 0 1 1 94.8,746" stroke="#2f86e8"/>
 <path d="M86.6,754.2 q2.4,-2.6 4.8,0" stroke="#2f86e8" stroke-width="2.6"/>
</g>
<circle cx="89" cy="745.6" r="3" fill="#f0525a"/>
<rect x="84" y="762" width="5" height="1.6" fill="#f0525a"/><rect x="89" y="762" width="5" height="1.6" fill="#2f86e8"/>
<!-- wegame -->
<rect x="135.6" y="732.2" width="31.4" height="31.6" rx="4" fill="#2a2320"/>
<path d="M158.6,741.4 A8.2,10.2 0 1 0 159.6,753.6" fill="none" stroke="#f6b72c" stroke-width="3.4" stroke-linecap="round"/>
<path d="M146.8,749.2 q2.2,-2 4,0 q1.6,1.8 3.4,-0.6 l2,-2.6 q2.2,-0.6 3.2,2 q0.6,4 -1,6.4" fill="none" stroke="#f6b72c" stroke-width="2.4" stroke-linecap="round" stroke-linejoin="round"/>
<!-- paint -->
<g>
 <path d="M198,752 q-2,-8 8,-12.6 q10,-4 16,1.4 q5,5.6 0.4,12.4 q-5,6.4 -12.6,6.6 q-4.6,0 -4.4,-3.2 q0.4,-3 -3,-2.6 q-3.6,0.4 -4.4,-2 z" fill="#c9dff2" stroke="#9fc0e0" stroke-width="0.8"/>
 <circle cx="203" cy="749" r="2.3" fill="#d9534a"/><circle cx="207.6" cy="744.6" r="2.3" fill="#7cb354"/><circle cx="214" cy="742.6" r="2.3" fill="#f0c33c"/><circle cx="210.6" cy="752" r="2.2" fill="#3f7fc0"/>
 <path d="M224.6,737 L213,762.6 L211.6,762 L222.6,736 Z" fill="#e8a33a" stroke="#c9802a" stroke-width="0.8"/>
 <path d="M222.4,738.6 q-0.4,-4 3.6,-5.4 q2,1.4 0.2,6.6 z" fill="#e9c9a0"/>
</g>
<!-- qq browser -->
<circle cx="274.8" cy="747.2" r="12" fill="none" stroke="url(#qqb)" stroke-width="6.8"/>
<circle cx="274.8" cy="747.2" r="15.6" fill="none" stroke="#0b5fd0" stroke-width="0.9" opacity=".7"/>
<path d="M272,762.6 q-3.4,-0.4 -3,-3.6 q0.6,-3 4,-2.6 q1.4,-5.4 6.6,-5.4 q4.6,0.2 5.8,4.4 q4.6,0 4.8,3.8 q-0.2,3.4 -3.8,3.4 z" fill="#fdfeff"/>
<!-- chrome -->
<g>
 <circle cx="337" cy="748" r="14.6" fill="#f7c32e"/>
 <path d="M337,748 L324.4,740.7 A14.6,14.6 0 0 1 349.6,740.7 Z" fill="#e8452f"/>
 <path d="M337,733.4 A14.6,14.6 0 0 1 349.6,740.7 L337,740.7 Z" fill="#e8452f"/>
 <path d="M324.4,740.7 A14.6,14.6 0 0 0 337,762.6 L343.4,751.6 L337,748 Z" fill="#2c9a4b"/>
 <path d="M324.4,740.7 L330.7,751.6 L337,762.6 A14.6,14.6 0 0 1 324.4,740.7 Z" fill="#2c9a4b"/>
 <path d="M337,740.7 H349.6 A14.6,14.6 0 0 1 337,762.6 L343.3,751.7 Z" fill="#f7c32e"/>
 <circle cx="337" cy="748" r="7.3" fill="#f4f7fb"/><circle cx="337" cy="748" r="5.8" fill="#4a8af4"/>
</g>
<!-- spyder task button -->
<rect x="369.5" y="729.5" width="158" height="40" rx="2.5" fill="url(#tbA)" stroke="#17365f" stroke-width="1"/>
<rect x="370.5" y="730.5" width="156" height="40" rx="2" fill="none" stroke="#d5e8f6" stroke-width="1" opacity=".8"/>
<path d="M371,748 Q440,741 527,737 V731 H371 Z" fill="#fff" opacity=".18"/>
<g>
 <path d="M395,737.6 L402.4,740.6 L405.4,748 L402.4,755.4 L395,758.4 L387.6,755.4 L384.6,748 L387.6,740.6 Z" fill="#2c2630"/>
 <g stroke="#f2f4f8" stroke-width="1.1" fill="none"><path d="M395,736 V760 M383,748 H407 M386.2,739.2 L403.8,756.8 M403.8,739.2 L386.2,756.8"/><path d="M395,742.6 L398.8,744.2 L400.4,748 L398.8,751.8 L395,753.4 L391.2,751.8 L389.6,748 L391.2,744.2 Z"/></g>
 <path d="M388.6,744.4 q2.6,-3.4 6.2,-1.6 q1.2,2.6 4.6,2.2 q3.2,0.8 2.4,4.4 q-2.6,2.8 -5.6,1 q-1.4,-2.6 -4.4,-1.6 q-3.4,-0.6 -3.2,-4.4 z" fill="#d9261c"/>
</g>
<text x="415" y="752" font-family="Liberation Sans, sans-serif" font-size="12.6" fill="#f6fbff">C:/Users/Admini...</text>
<!-- pointofix task button -->
<rect x="532" y="729.5" width="158" height="40" rx="2.5" fill="url(#tbB)" stroke="#123a6e" stroke-width="1"/>
<rect x="532" y="729.5" width="158" height="40" rx="2.5" fill="url(#tbBs)"/>
<rect x="533" y="730.5" width="156" height="40" rx="2" fill="none" stroke="#79b2e6" stroke-width="1" opacity=".75"/>
<g>
 <rect x="541" y="732.4" width="16" height="15.6" fill="#86bdf0"/><rect x="557" y="732.4" width="15.8" height="15.6" fill="#9fd08e"/>
 <rect x="541" y="748" width="16" height="15.6" fill="#fcd79c"/><rect x="557" y="748" width="15.8" height="15.6" fill="#dfe2e0"/>
 <rect x="541" y="732.4" width="31.8" height="31.2" rx="3" fill="none" stroke="#2c78ca" stroke-width="1.2" opacity=".5"/>
 <path d="M542.4,733.8 L556,747" stroke="#dc4a3c" stroke-width="3" stroke-linecap="round"/>
 <circle cx="557" cy="748" r="3.6" fill="#ee3d24"/>
 <path d="M558.6,749.4 V764.4 L562,761.2 L564.4,766.4 L566.6,765.4 L564.2,760.4 H569 Z" fill="#fff" stroke="#111" stroke-width="0.9" stroke-linejoin="round"/>
</g>
<text x="577.5" y="752.4" font-family="Liberation Sans, sans-serif" font-size="12.8" fill="#f4faff">Pointofix</text>
<!-- tray -->
<circle cx="1215" cy="748.8" r="7.4" fill="#1b1b2c" stroke="#eef2f8" stroke-width="1.4"/><circle cx="1215" cy="748.8" r="4.4" fill="#f04a2f"/>
<path d="M1232.4,744.2 q6.6,-3 13.2,0 q0.2,8 -6.6,11.6 q-6.8,-3.6 -6.6,-11.6 z" fill="#2a7fe0" stroke="#dff0ff" stroke-width="1.4" stroke-linejoin="round"/>
<path d="M1234.6,746.6 l4.4,4.2 l4.4,-4.2" fill="none" stroke="#e6f4ff" stroke-width="1.5"/>
<ellipse cx="1262.8" cy="748.6" rx="4.6" ry="7.6" fill="#0a2f7a"/>
<path d="M1259.2,745 L1266,751.6 L1262.6,755 V742.2 L1266,745.6 L1259.2,752.2" fill="none" stroke="#fff" stroke-width="1.3"/>
<g fill="none" stroke="#fff" stroke-width="1.5"><rect x="1280.6" y="744.6" width="7" height="10.6" rx="1"/><path d="M1282.8,744.4 v-1.8 h5.4 v2"/></g>
<path d="M1286,745 h6.6 v3.4 q0,2.6 -3.3,2.6 q-3.3,0 -3.3,-2.6 z M1287.6,742 v3 M1291,742 v3 M1289.3,751 v3.4 h-2.6" fill="#fff" stroke="#fff" stroke-width="1.3"/>
<g fill="#fff"><rect x="1304" y="752" width="2" height="2"/><rect x="1307" y="750.4" width="2" height="3.6"/><rect x="1310" y="748.4" width="2" height="5.6"/><rect x="1313" y="746.2" width="2" height="7.8"/><rect x="1316" y="743.8" width="2" height="10.2"/></g>
<path d="M1329.6,746.2 h2.6 l4,-4 v13.4 l-4,-4 h-2.6 z" fill="#fff"/>
<path d="M1338.6,745.6 q2.4,3.2 0,6.6" fill="none" stroke="#cfe0f4" stroke-width="1.1"/>
<!-- show desktop -->
<rect x="1351" y="729" width="9" height="39" fill="#2a5aa8" opacity=".55"/>
<rect x="1351" y="729" width="1" height="39" fill="#7fa6d8" opacity=".7"/>
</svg>
<!--TK-END-->
<!-- ===== OVERLAYS ===== -->
<!--OV-START-->
<!-- pointofix float window -->
<div class="abs" style="left:1249px;top:67px;width:68px;height:59px;box-sizing:border-box;background:#f0f0f0;border:1px solid #8c8c8c;box-shadow:inset 1px 1px 0 #fff"></div>
<div class="abs ui" style="left:1257px;top:73px;line-height:17px;font-size:12.6px;letter-spacing:-0.25px;color:#222">Poin...</div>
<div class="abs" style="left:1292px;top:72px;width:19px;height:19px;box-sizing:border-box;border:1px solid #a8a8a8;border-radius:2.5px;background:linear-gradient(180deg,#f6f6f6,#e6e6e6)"></div>
<svg class="abs" style="left:1292px;top:72px" width="18" height="19" viewBox="0 0 18 19"><rect x="5.2" y="5.8" width="7.6" height="7.4" rx="1" fill="#fff" stroke="#333" stroke-width="1"/><path d="M6.6,7.2 L11.4,11.8 M11.4,7.2 L6.6,11.8" stroke="#333" stroke-width="1.3"/></svg>
<div class="abs" style="left:1255px;top:93px;width:56px;height:27px;box-sizing:border-box;border:1px solid #222;background:#f0f0f0"></div>
<div class="abs" style="left:1257px;top:95px;width:52px;height:23px;box-sizing:border-box;border:1px solid;border-color:#fff #6e6e6e #6e6e6e #fff;box-shadow:inset -1px -1px 0 #a6a6a6,inset 1px 1px 0 #e6e6e6;background:linear-gradient(180deg,#f8f8f8 0,#f0f0f0 60%,#dcdcdc 100%)"></div>
<div class="abs" style="left:1271px;top:100px;line-height:14px;font-size:12px;font-family:'Liberation Sans','Noto Sans CJK SC',sans-serif;color:#000;white-space:nowrap">开始</div>
<!-- pusheen IME -->
<svg class="abs" style="left:1240px;top:596px" width="120" height="80" viewBox="1240 596 120 80">
 <rect x="1356.5" y="596" width="4" height="57" fill="#4b5068"/>
 <path d="M1356,644 q3,-1 4,-1 v8 q-2,1 -4,0 z" fill="#8a7560"/>
 <path d="M1254.4,646 Q1253.6,630 1258.6,624.6 L1261.8,618.6 L1265.6,623 Q1272,621.4 1277.6,622.6 L1281.4,616.2 L1285.8,622 Q1310,620.6 1336,622.4 Q1356.4,625.6 1356.4,644 Q1356,663 1338,664.4 L1336.4,667.4 L1334.6,664.6 Q1300,666.6 1267.4,664.4 L1265.8,666.6 L1264,664 Q1254.6,661 1254.4,646 Z" fill="#b4a193" stroke="#5c3b1d" stroke-width="1.5" stroke-linejoin="round"/>
 <ellipse cx="1329" cy="625" rx="2.6" ry="1.6" fill="#8f7a68"/><ellipse cx="1340" cy="626.4" rx="2.4" ry="1.6" fill="#8f7a68"/>
 <g fill="none" stroke="#5c3b1d" stroke-width="0.9" stroke-linecap="round">
  <path d="M1249,628.4 H1259 M1249,632.4 H1259"/>
  <path d="M1295,628.4 L1286.4,631 L1295,634"/>
  <path d="M1262.4,630.2 q1.6,2.2 3.2,0 M1277.4,630.2 q1.6,2.2 3.2,0" stroke-width="1.4"/>
  <path d="M1269.6,655.4 q0.2,2.6 2.4,2 M1338.6,655.4 q0.2,2.6 2.4,2"/>
  <path d="M1258.6,604.6 h3 l-3,3.4 h3.2 M1267.6,610.6 h2.8 l-2.8,3.2 h3"/>
 </g>
 <path d="M1270,634.4 l1.4,-1.4 l1.4,1.4 l-1.4,1.2 z" fill="#5c3b1d"/>
 <text x="1283.4" y="656.4" font-family="Liberation Sans, Noto Sans CJK SC, sans-serif" font-size="13" fill="#5c3b1d">中</text>
 <circle cx="1309.8" cy="633.8" r="2.3" fill="#c9b8aa" stroke="#5c3b1d" stroke-width="0.9"/>
 <path d="M1313,638.6 q1.6,0.6 0.6,2.6" fill="none" stroke="#5c3b1d" stroke-width="1.3" stroke-linecap="round"/>
 <path d="M1311.6,647.4 Q1320,652 1308.4,657.2 Q1313.4,652.6 1311.6,647.4 Z" fill="#5c3b1d" stroke="#5c3b1d" stroke-width="0.8" stroke-linejoin="round"/>
 <path d="M1328.6,642 l3,-2 q2.4,1.6 4.8,0 l3,2 l-1.6,2.4 l-1.4,-0.8 v5 h-4.8 v-5 l-1.4,0.8 z" fill="#5c3b1d"/>
</svg>
<!--OV-END-->
</body>
</html>
